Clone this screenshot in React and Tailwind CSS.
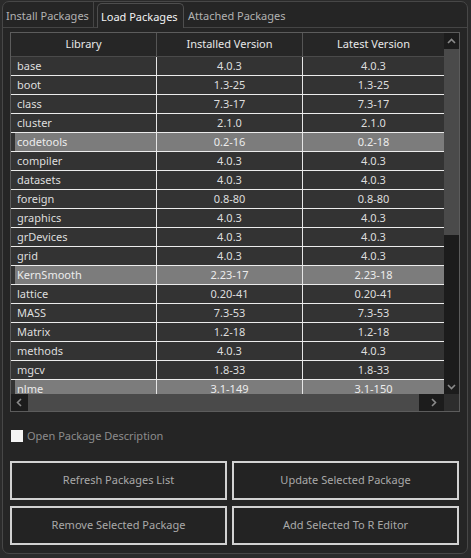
import React from "react";

const rows = [
  ["base", "4.0.3", "4.0.3"],
  ["boot", "1.3-25", "1.3-25"],
  ["class", "7.3-17", "7.3-17"],
  ["cluster", "2.1.0", "2.1.0"],
  ["codetools", "0.2-16", "0.2-18", true],
  ["compiler", "4.0.3", "4.0.3"],
  ["datasets", "4.0.3", "4.0.3"],
  ["foreign", "0.8-80", "0.8-80"],
  ["graphics", "4.0.3", "4.0.3"],
  ["grDevices", "4.0.3", "4.0.3"],
  ["grid", "4.0.3", "4.0.3"],
  ["KernSmooth", "2.23-17", "2.23-18", true],
  ["lattice", "0.20-41", "0.20-41"],
  ["MASS", "7.3-53", "7.3-53"],
  ["Matrix", "1.2-18", "1.2-18"],
  ["methods", "4.0.3", "4.0.3"],
  ["mgcv", "1.8-33", "1.8-33"],
  ["nlme", "3.1-149", "3.1-150", true],
];

const Chevron = ({ dir }) => {
  const pts = {
    up: "2,7 5.5,3.5 9,7",
    down: "2,4 5.5,7.5 9,4",
    left: "7,2 3.5,5.5 7,9",
    right: "4,2 7.5,5.5 4,9",
  }[dir];
  return (
    <svg width="11" height="11" viewBox="0 0 11 11">
      <polyline points={pts} fill="none" stroke="#8a8a8a" strokeWidth="1.6" />
    </svg>
  );
};

const Row = ({ r }) => {
  const [name, inst, latest, sel] = r;
  const txt = sel ? "text-[#ececec]" : "text-[#dedede]";
  const bg = sel ? "bg-[#7c7c7c]" : "";
  return (
    <div className="flex h-[19px] shrink-0 border-b border-[#ececec] bg-[#333333]">
      <div className="w-[146px] shrink-0 border-r border-[#e6e6e6] flex">
        {sel ? (
          <div className={`flex-1 flex items-center ml-[4px] pl-[2px] ${bg} ${txt}`}>{name}</div>
        ) : (
          <div className={`flex-1 flex items-center pl-[6px] ${txt}`}>{name}</div>
        )}
      </div>
      <div className={`w-[146px] shrink-0 border-r border-[#e6e6e6] flex items-center justify-center ${bg} ${txt}`}>{inst}</div>
      <div className={`w-[141px] shrink-0 flex items-center justify-center ${bg} ${txt}`}>{latest}</div>
    </div>
  );
};

const Button = ({ children, w }) => (
  <div className={`${w} h-[39px] border-2 border-[#d2d2d2] bg-[#232323] flex items-center justify-center text-[#a9a9a9] text-[11px]`}>
    {children}
  </div>
);

export default function App() {
  return (
    <div
      className="w-[471px] h-[558px] bg-[#2b2b2b] pt-[1px] pl-[2px] overflow-hidden"
      style={{ fontFamily: '"Noto Sans", "Open Sans", sans-serif' }}
    >
      <div className="w-[466px] h-[553px] border border-[#474747] rounded-[7px] bg-[#252525] flex flex-col overflow-hidden">
        {/* Tabs */}
        <div className="flex h-[26px] shrink-0 text-[11px] whitespace-nowrap">
          <div className="w-[91px] flex items-center pl-[3px] pt-[3px] text-[#b2b2b2] border-r border-b border-[#454545]">
            Install Packages
          </div>
          <div className="w-[3px] border-b border-[#454545]" />
          <div className="w-[87px] flex items-center pl-[3px] pt-[2px] mt-[1px] text-[#f2f2f2] border border-b-0 border-[#4e4e4e] rounded-t-[5px] bg-[#262626]">
            Load Packages
          </div>
          <div className="w-[104px] flex items-center pl-[4px] pt-[3px] text-[#b2b2b2] border-b border-[#454545]">
            Attached Packages
          </div>
          <div className="flex-1 border-b border-[#454545]" />
        </div>

        {/* Content */}
        <div className="flex flex-col pl-[7px] pt-[4px]">
          {/* Table */}
          <div className="w-[450px] h-[380px] border border-[#5c5c5c] flex flex-col text-[11px]">
            <div className="flex h-[361px]">
              <div className="w-[433px] flex flex-col overflow-hidden">
                <div className="flex h-[24px] shrink-0 bg-[#262626] border-b border-[#4a4a4a] text-[#e8e8e8]">
                  <div className="w-[146px] border-r border-[#555555] flex items-center justify-center">Library</div>
                  <div className="w-[146px] border-r border-[#555555] flex items-center justify-center">Installed Version</div>
                  <div className="w-[141px] flex items-center justify-center">Latest Version</div>
                </div>
                <div className="flex flex-col overflow-hidden">
                  {rows.map((r) => (
                    <Row key={r[0]} r={r} />
                  ))}
                </div>
              </div>
              {/* vertical scrollbar */}
              <div className="w-[15px] flex flex-col bg-[#1c1c1c]">
                <div className="h-[16px] flex items-center justify-center">
                  <Chevron dir="up" />
                </div>
                <div className="h-[186px] bg-[#4a4a4a]" />
                <div className="flex-1" />
                <div className="h-[16px] flex items-center justify-center">
                  <Chevron dir="down" />
                </div>
              </div>
            </div>
            {/* horizontal scrollbar */}
            <div className="flex h-[17px]">
              <div className="w-[17px] bg-[#1c1c1c] flex items-center justify-center">
                <Chevron dir="left" />
              </div>
              <div className="w-[391px] bg-[#4a4a4a]" />
              <div className="w-[25px] bg-[#1c1c1c] flex items-center justify-end pr-[5px]">
                <Chevron dir="right" />
              </div>
              <div className="flex-1 bg-[#2d2d2d]" />
            </div>
          </div>

          {/* Checkbox */}
          <div className="flex items-center mt-[18px] ml-[1px] h-[12px]">
            <div className="w-[12px] h-[12px] bg-[#f4f4f4]" />
            <span className="ml-[4px] text-[11px] text-[#8c8c8c]">Open Package Description</span>
          </div>

          {/* Buttons */}
          <div className="grid grid-cols-[217px_227px] gap-x-[5px] gap-y-[6px] mt-[19px]">
            <Button w="w-[217px]">Refresh Packages List</Button>
            <Button w="w-[227px]">Update Selected Package</Button>
            <Button w="w-[217px]">Remove Selected Package</Button>
            <Button w="w-[227px]">Add Selected To R Editor</Button>
          </div>
        </div>
      </div>
    </div>
  );
}
